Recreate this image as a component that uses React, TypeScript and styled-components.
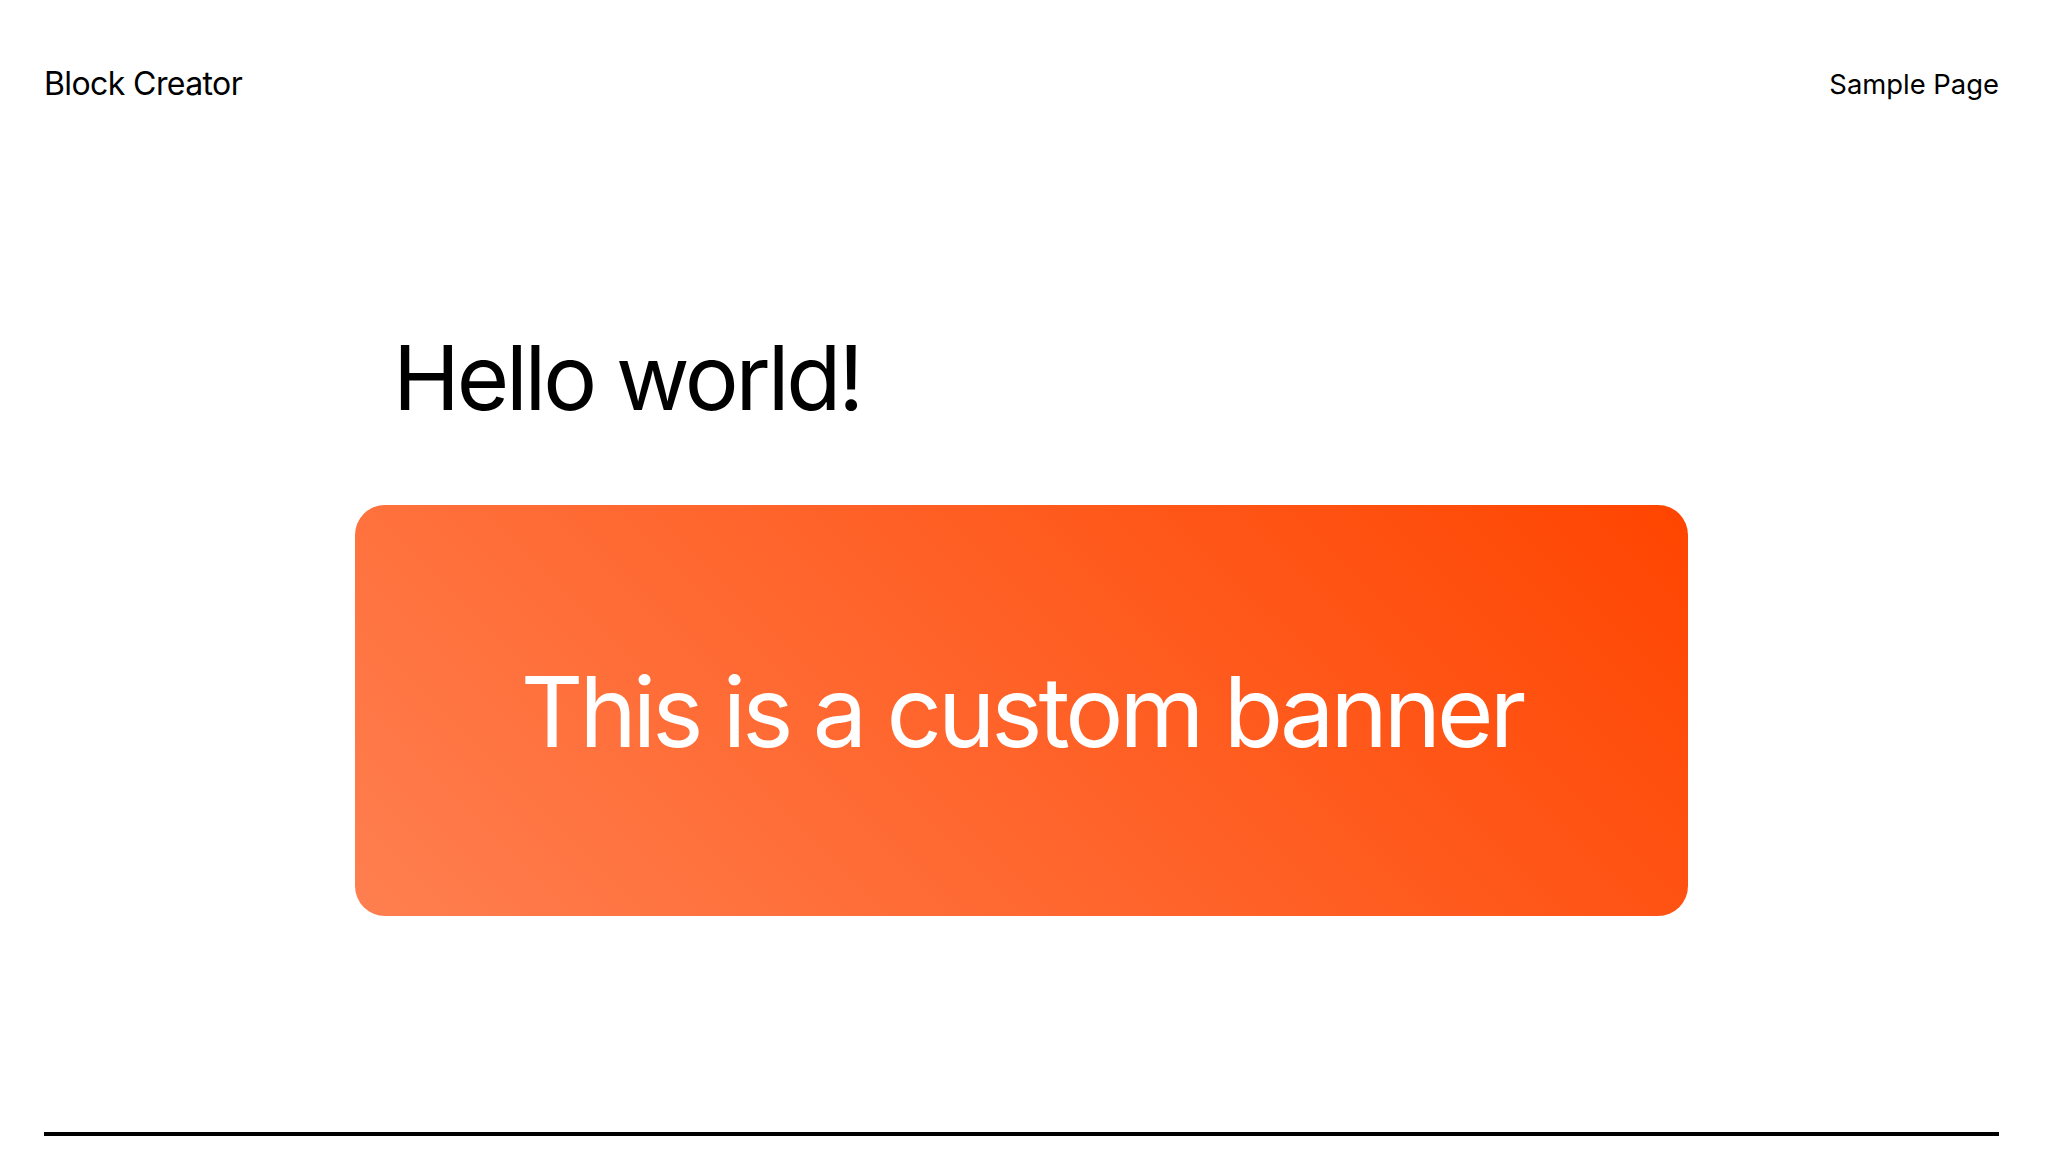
import React from "react";
import styled, { createGlobalStyle } from "styled-components";

const GlobalStyle = createGlobalStyle`
    html, body {
        margin: 0;
        padding: 0;
        background: #ffffff;
    }
    body {
        font-family: Inter, "Noto Sans", "Liberation Sans", sans-serif;
        color: #000000;
    }
`;

const Page = styled.div`
    display: flex;
    flex-direction: column;
    padding: 0 49px 0 44px;
    min-height: 1169px;
    box-sizing: border-box;
`;

const Header = styled.header`
    display: flex;
    align-items: center;
    justify-content: space-between;
    padding-top: 66px;
`;

const SiteTitle = styled.a`
    font-size: 32px;
    line-height: 36px;
    letter-spacing: -0.6px;
    color: #000;
    text-decoration: none;
`;

const NavLink = styled.a`
    font-size: 27.4px;
    line-height: 36px;
    color: #000;
    text-decoration: none;
`;

const Main = styled.main`
    width: 1333px;
    margin: 222px auto 0;
    display: flex;
    flex-direction: column;
`;

const Heading = styled.h1`
    margin: 0;
    padding-left: 38px;
    font-size: 90px;
    font-weight: 400;
    line-height: 1.2;
    letter-spacing: -3.2px;
`;

const Banner = styled.section`
    margin-top: 73px;
    height: 411px;
    box-sizing: border-box;
    padding-top: 4px;
    border-radius: 30px;
    background: linear-gradient(45deg, #ff7f50, #ff4500);
    display: flex;
    align-items: center;
    justify-content: center;
`;

const BannerText = styled.p`
    margin: 0;
    color: #ffffff;
    font-size: 97px;
    font-weight: 400;
    line-height: 1.2;
    letter-spacing: -4px;
`;

const Footer = styled.footer`
    margin-top: 216px;
    border-top: 4px solid #000;
`;

export default function App() {
    return (
        <>
            <GlobalStyle />
            <Page>
                <Header>
                    <SiteTitle href="#">Block Creator</SiteTitle>
                    <NavLink href="#">Sample Page</NavLink>
                </Header>
                <Main>
                    <Heading>Hello world!</Heading>
                    <Banner>
                        <BannerText>This is a custom banner</BannerText>
                    </Banner>
                </Main>
                <Footer />
            </Page>
        </>
    );
}
